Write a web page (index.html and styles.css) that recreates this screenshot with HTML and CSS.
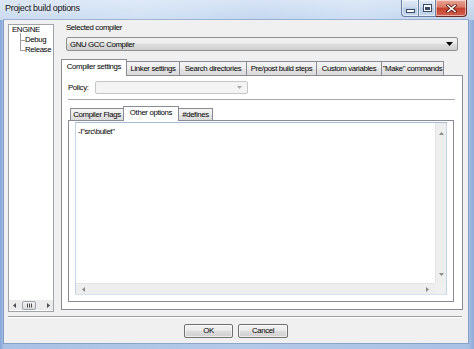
FILE: index.html
```html
<!DOCTYPE html>
<html>
<head>
<meta charset="utf-8">
<title>Project build options</title>
<link rel="stylesheet" href="styles.css">
</head>
<body>
<div class="window">
  <div class="titlebar">
    <span class="title">Project build options</span>
    <div class="caption">
      <div class="cbtn cmin"><svg width="9" height="4" viewBox="0 0 9 4"><rect x="0.5" y="0.5" width="8" height="3" fill="#fff" stroke="#3b4a65" stroke-width="1"/></svg></div>
      <div class="cbtn cmax"><svg width="9" height="8" viewBox="0 0 9 8"><rect x="0.5" y="0.5" width="8" height="7" fill="#fff" stroke="#3b4a65" stroke-width="1"/><rect x="2" y="3" width="5" height="3" fill="#3b4a65"/></svg></div>
      <div class="cbtn cclose"><svg width="11" height="9" viewBox="0 0 11 9"><path d="M2 1.5 L9 7.5 M9 1.5 L2 7.5" stroke="#5a1c12" stroke-width="3.2" stroke-linecap="square"/><path d="M2 1.5 L9 7.5 M9 1.5 L2 7.5" stroke="#fff" stroke-width="1.6" stroke-linecap="square"/></svg></div>
    </div>
  </div>
  <div class="frame">
    <div class="client">
      <div class="main">
        <div class="tree">
          <div class="tree-items">
            <div class="node root">ENGINE</div>
            <div class="node child first">Debug</div>
            <div class="node child last">Release</div>
          </div>
          <div class="tscroll">
            <span class="sarrow"><svg width="4" height="5" viewBox="0 0 4 5"><path d="M3 0 L0 2.5 L3 5 Z" fill="#4d4d4d"/></svg></span>
            <span class="thumb"><svg width="5" height="5" viewBox="0 0 5 5"><path d="M0.5 0.5 V4.5 M2.5 0.5 V4.5 M4.5 0.5 V4.5" stroke="#4b4b4b" stroke-width="1"/></svg></span>
            <span class="strack"></span>
            <span class="sarrow"><svg width="4" height="5" viewBox="0 0 4 5"><path d="M1 0 L4 2.5 L1 5 Z" fill="#4d4d4d"/></svg></span>
          </div>
        </div>
        <div class="right">
          <div class="label">Selected compiler</div>
          <div class="combo">
            <span class="combo-text">GNU GCC Compiler</span>
            <span class="combo-arrow"><svg width="7" height="4" viewBox="0 0 7 4"><path d="M0 0 H7 L3.5 4 Z" fill="#000"/></svg></span>
          </div>
          <div class="tabs">
            <div class="tabstrip outer">
              <div class="tab sel">Compiler settings</div>
              <div class="tab">Linker settings</div>
              <div class="tab">Search directories</div>
              <div class="tab">Pre/post build steps</div>
              <div class="tab">Custom variables</div>
              <div class="tab">"Make" commands</div>
            </div>
            <div class="panel">
              <div class="policy-row">
                <span class="policy-label">Policy:</span>
                <div class="combo disabled">
                  <span class="combo-text"></span>
                  <span class="combo-arrow"><svg width="5" height="3" viewBox="0 0 5 3"><path d="M0 0 H5 L2.5 3 Z" fill="#a8a8a8"/></svg></span>
                </div>
              </div>
              <div class="sep"></div>
              <div class="tabstrip inner">
                <div class="tab">Compiler Flags</div>
                <div class="tab sel">Other options</div>
                <div class="tab">#defines</div>
              </div>
              <div class="subpanel">
                <div class="textarea">
                  <div class="text">-I"src\bullet"</div>
                  <div class="vscroll">
                    <svg width="5" height="3" viewBox="0 0 5 3"><path d="M0 3 L2.5 0 L5 3 Z" fill="#8a8a8a"/></svg>
                    <svg width="5" height="3" viewBox="0 0 5 3"><path d="M0 0 L2.5 3 L5 0 Z" fill="#8a8a8a"/></svg>
                  </div>
                  <div class="hscroll">
                    <svg width="3" height="5" viewBox="0 0 3 5"><path d="M3 0 L0 2.5 L3 5 Z" fill="#8a8a8a"/></svg>
                    <svg width="3" height="5" viewBox="0 0 3 5"><path d="M0 0 L3 2.5 L0 5 Z" fill="#8a8a8a"/></svg>
                  </div>
                  <div class="corner"></div>
                </div>
              </div>
            </div>
          </div>
        </div>
      </div>
      <div class="footsep"></div>
      <div class="buttons">
        <div class="btn">OK</div>
        <div class="btn">Cancel</div>
      </div>
    </div>
  </div>
</div>
</body>
</html>
```

FILE: styles.css
```css
* { box-sizing: border-box; }
html, body { margin: 0; padding: 0; }
body {
  width: 474px;
  height: 349px;
  overflow: hidden;
  background: #9db7df;
  font-family: "Liberation Sans", Arial, sans-serif;
  font-size: 7.8px;
  letter-spacing: -0.35px;
  color: #000;
}
.window {
  width: 474px;
  height: 349px;
  display: flex;
  flex-direction: column;
  background: linear-gradient(90deg, #86a5d8 0px, #a9c1e5 4px, #b4c9e8 50%, #a9c1e5 468px, #8eaad8 474px);
}
.titlebar {
  height: 20px;
  display: flex;
  align-items: flex-start;
  justify-content: space-between;
  background:
    linear-gradient(180deg, rgba(255,255,255,0.4) 0px, rgba(255,255,255,0.1) 20px),
    linear-gradient(90deg, #c3d6ef 0%, #cadcf2 30%, #bdd2ee 55%, #c6d9f1 75%, #b7cde9 100%);
}
.title {
  font-size: 9px;
  letter-spacing: -0.3px;
  line-height: 10px;
  margin: 3px 0 0 5px;
  color: #111;
  text-shadow: 0 0 4px rgba(255,255,255,0.9);
}
.caption {
  display: flex;
  margin-right: 7px;
  height: 17px;
}
.cbtn {
  height: 17px;
  display: flex;
  align-items: center;
  justify-content: center;
  border: 1px solid #6a80a2;
  border-top: none;
  box-shadow: inset 0 0 0 1px rgba(255,255,255,0.5);
}
.cmin {
  width: 18px;
  border-bottom-left-radius: 4px;
  background: linear-gradient(180deg, #e1eaf6 0%, #cfdcee 45%, #b9cce6 50%, #c6d7ed 100%);
  padding-top: 5px;
}
.cmax {
  width: 17px;
  border-left: none;
  background: linear-gradient(180deg, #e1eaf6 0%, #cfdcee 45%, #b9cce6 50%, #c6d7ed 100%);
}
.cclose {
  width: 31px;
  border-left: none;
  border-color: #6b2d22;
  border-bottom-right-radius: 4px;
  background: linear-gradient(180deg, #e9a597 0%, #d97a68 45%, #c4402c 50%, #d2614e 100%);
}
.frame {
  flex: 1;
  display: flex;
  padding: 0 6px 6px 4px;
  min-height: 0;
}
.client {
  flex: 1;
  background: #f0f0f0;
  display: flex;
  flex-direction: column;
  box-shadow: 0 0 0 1px rgba(70,100,150,0.35);
}
.main {
  display: flex;
  padding: 3px 0 0 4px;
  height: 292px;
}
.tree {
  margin-top: 1px;
  width: 46px;
  height: 288px;
  border: 1px solid #a0a4ab;
  background: #fff;
  display: flex;
  flex-direction: column;
  justify-content: space-between;
}
.tree-items {
  padding: 0 0 0 3px;
}
.node {
  height: 10px;
  line-height: 10px;
  white-space: nowrap;
}
.node.child {
  margin-left: 8px;
  padding-left: 5px;
  position: relative;
}
.node.child::before {
  content: "";
  position: absolute;
  left: 0;
  top: -5px;
  height: 10px;
  width: 4px;
  border-left: 1px solid #a0a0a0;
  border-bottom: 1px solid #a0a0a0;
}
.node.child.first::before {
  top: -2px;
  height: 7px;
}
.tscroll {
  height: 10px;
  margin-bottom: 1px;
  display: flex;
  align-items: center;
  background: #ececec;
}
.sarrow {
  width: 11px;
  height: 10px;
  display: flex;
  align-items: center;
  justify-content: center;
}
.thumb {
  width: 14px;
  height: 9px;
  margin-left: 2px;
  border: 1px solid #9da2aa;
  border-radius: 2px;
  background: linear-gradient(180deg, #f4f4f4, #dcdcdc);
  display: flex;
  align-items: center;
  justify-content: center;
}
.strack { flex: 1; }
.right {
  flex: 1;
  margin: 0 5px 0 7px;
  display: flex;
  flex-direction: column;
}
.label {
  height: 10px;
  line-height: 10px;
  padding-left: 5px;
}
.combo {
  margin: 4px 5px 0 5px;
  height: 14px;
  border: 1px solid #8e8f8f;
  border-radius: 2px;
  background: linear-gradient(180deg, #f2f2f2 0%, #ebebeb 45%, #dddddd 50%, #cfcfcf 100%);
  display: flex;
  align-items: center;
  justify-content: space-between;
  padding: 0 4px 0 3px;
}
.combo-arrow { display: flex; align-items: center; }
.combo.disabled {
  margin: 0;
  width: 153px;
  height: 13px;
  border-color: #c6c6c6;
  background: #f4f4f4;
  padding: 0 5px 0 3px;
}
.tabs {
  margin-top: 8px;
  display: flex;
  flex-direction: column;
}
.tabstrip {
  display: flex;
  align-items: flex-end;
}
.tabstrip.outer { height: 16px; }
.tab {
  height: 14px;
  line-height: 13px;
  text-align: center;
  white-space: nowrap;
  border: 1px solid #898c95;
  border-bottom: none;
  margin-left: -1px;
  background: linear-gradient(180deg, #f4f4f4 0%, #ededed 50%, #e2e2e2 51%, #dcdcdc 100%);
}
.tab.sel {
  height: 17px;
  margin-bottom: -1px;
  background: #fff;
  z-index: 2;
  line-height: 14px;
}
.outer .tab:nth-child(1) { width: 66px; margin-left: 0; }
.outer .tab:nth-child(2) { width: 54px; }
.outer .tab:nth-child(3) { width: 68px; }
.outer .tab:nth-child(4) { width: 71px; }
.outer .tab:nth-child(5) { width: 66px; }
.outer .tab:nth-child(6) { width: 63px; }
.panel {
  height: 235px;
  border: 1px solid #898c95;
  background: #fff;
  padding: 5px 8px 7px 6px;
  display: flex;
  flex-direction: column;
}
.policy-row {
  display: flex;
  align-items: center;
  height: 13px;
}
.policy-label { width: 27px; }
.sep {
  margin-top: 5px;
  margin-right: -1px;
  height: 2px;
  border-top: 1px solid #a9a9a9;
  border-bottom: 1px solid #fff;
}
.tabstrip.inner {
  margin-top: 5px;
  height: 14px;
  padding-left: 2px;
}
.inner .tab { height: 12px; line-height: 11px; }
.inner .tab.sel { height: 15px; line-height: 12px; }
.inner .tab:nth-child(1) { width: 54px; margin-left: 0; }
.inner .tab:nth-child(2) { width: 56px; }
.inner .tab:nth-child(3) { width: 35px; }
.subpanel {
  flex: 1;
  border: 1px solid #898c95;
  background: #fff;
  padding: 1px 6px 6px 6px;
  display: flex;
}
.textarea {
  flex: 1;
  border: 1px solid;
  border-color: #a6bbd3 #c4d5e7 #d4e1ee #c4d5e7;
  display: grid;
  grid-template-columns: 1fr 11px;
  grid-template-rows: 1fr 11px;
}
.text {
  padding: 4px 0 0 2px;
  line-height: 9px;
}
.vscroll {
  background: #eeeeee;
  border-left: 1px solid #e4e4e4;
  display: flex;
  flex-direction: column;
  align-items: center;
  justify-content: space-between;
  padding: 9px 0 7px 0;
}
.hscroll {
  background: #eeeeee;
  border-top: 1px solid #e4e4e4;
  display: flex;
  align-items: center;
  justify-content: space-between;
  padding: 0 6px 0 6px;
}
.corner { background: #f0f0f0; }
.footsep {
  margin: 4px 6px 0 4px;
  height: 2px;
  border-top: 1px solid #a0a0a0;
  border-bottom: 1px solid #fff;
}
.buttons {
  margin-top: 6px;
  display: flex;
  justify-content: center;
  gap: 5px;
}
.btn {
  width: 49px;
  height: 14px;
  border: 1px solid #707070;
  border-radius: 2px;
  background: linear-gradient(180deg, #f2f2f2 0%, #ebebeb 45%, #dddddd 50%, #cfcfcf 100%);
  box-shadow: inset 0 0 0 1px rgba(255,255,255,0.6);
  text-align: center;
  line-height: 12px;
}
.btn + .btn { width: 50px; }
```
